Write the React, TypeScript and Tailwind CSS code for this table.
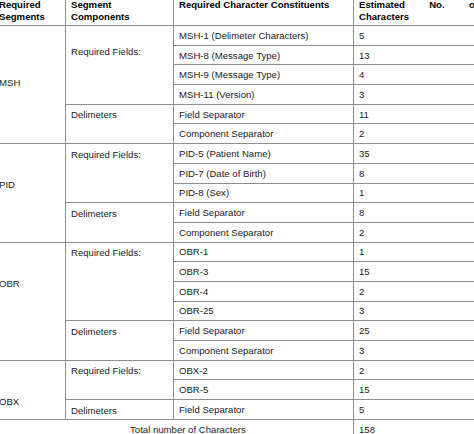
import React from "react";

type Row = [string, string];
type Group = { label: string; pt: string; rows: Row[] };
type Seg = { name: string; pt: string; groups: Group[] };

const span: Record<number, string> = {
  1: "row-span-1",
  2: "row-span-2",
  3: "row-span-3",
  4: "row-span-4",
  5: "row-span-5",
  6: "row-span-6",
};

const data: Seg[] = [
  {
    name: "MSH",
    pt: "pt-[51px]",
    groups: [
      {
        label: "Required Fields:",
        pt: "pt-[20px]",
        rows: [
          ["MSH-1 (Delimeter Characters)", "5"],
          ["MSH-8 (Message Type)", "13"],
          ["MSH-9 (Message Type)", "4"],
          ["MSH-11 (Version)", "3"],
        ],
      },
      {
        label: "Delimeters",
        pt: "pt-[4.5px]",
        rows: [
          ["Field Separator", "11"],
          ["Component Separator", "2"],
        ],
      },
    ],
  },
  {
    name: "PID",
    pt: "pt-[35px]",
    groups: [
      {
        label: "Required Fields:",
        pt: "pt-[4.5px]",
        rows: [
          ["PID-5 (Patient Name)", "35"],
          ["PID-7 (Date of Birth)", "8"],
          ["PID-8 (Sex)", "1"],
        ],
      },
      {
        label: "Delimeters",
        pt: "pt-[4.5px]",
        rows: [
          ["Field Separator", "8"],
          ["Component Separator", "2"],
        ],
      },
    ],
  },
  {
    name: "OBR",
    pt: "pt-[35px]",
    groups: [
      {
        label: "Required Fields:",
        pt: "pt-[4.5px]",
        rows: [
          ["OBR-1", "1"],
          ["OBR-3", "15"],
          ["OBR-4", "2"],
          ["OBR-25", "3"],
        ],
      },
      {
        label: "Delimeters",
        pt: "pt-[4.5px]",
        rows: [
          ["Field Separator", "25"],
          ["Component Separator", "3"],
        ],
      },
    ],
  },
  {
    name: "OBX",
    pt: "pt-[35px]",
    groups: [
      {
        label: "Required Fields:",
        pt: "pt-[4.5px]",
        rows: [
          ["OBX-2", "2"],
          ["OBR-5", "15"],
        ],
      },
      {
        label: "Delimeters",
        pt: "pt-[4.5px]",
        rows: [["Field Separator", "5"]],
      },
    ],
  },
];

const line = "border-[#8e8e8e]";

export default function App() {
  const cells: React.ReactNode[] = [];
  data.forEach((s) => {
    const n = s.groups.reduce((a, g) => a + g.rows.length, 0);
    cells.push(
      <div key={s.name} className={`${span[n]} border-r border-b ${line} pl-[5px] ${s.pt}`}>
        {s.name}
      </div>
    );
    s.groups.forEach((g, gi) => {
      cells.push(
        <div key={s.name + gi} className={`${span[g.rows.length]} border-r border-b ${line} pl-[5px] ${g.pt}`}>
          {g.label}
        </div>
      );
      g.rows.forEach((r, ri) => {
        cells.push(
          <div key={s.name + gi + "a" + ri} className={`flex items-center border-r border-b ${line} pl-[5px] pt-px`}>
            {r[0]}
          </div>
        );
        cells.push(
          <div key={s.name + gi + "b" + ri} className={`flex items-center border-r border-b ${line} pl-[5px] pt-px`}>
            {r[1]}
          </div>
        );
      });
    });
  });

  return (
    <div
      className="w-[474px] h-[434px] overflow-hidden bg-white text-[#1c1c1c] text-[9.6px] leading-[12px]"
      style={{ fontFamily: '"Liberation Sans", Arial, sans-serif' }}
    >
      <div className="-ml-[6px] grid grid-cols-[72px_108px_180px_132px] grid-rows-[26px_repeat(21,19.7px)]">
        <div className={`border-r border-b ${line} pl-[5px] pr-[5px] font-bold text-black leading-[11.5px]`}>
          <div className="-mt-[1px]">Required Segments</div>
        </div>
        <div className={`border-r border-b ${line} pl-[5px] pr-[5px] font-bold text-black leading-[11.5px]`}>
          <div className="-mt-[1px]">Segment Components</div>
        </div>
        <div className={`border-r border-b ${line} pl-[5px] pr-[5px] font-bold text-black leading-[11.5px]`}>
          <div className="-mt-[1px]">Required Character Constituents</div>
        </div>
        <div className={`border-r border-b ${line} pl-[5px] pr-[7px] font-bold text-black leading-[11.5px]`}>
          <div className="-mt-[1px] text-justify">Estimated No. of Characters</div>
        </div>
        {cells}
        <div className={`col-span-3 flex items-center border-r ${line} pl-[136px] pt-px`}>
          Total number of Characters
        </div>
        <div className={`flex items-center border-r ${line} pl-[5px] pt-px`}>158</div>
      </div>
    </div>
  );
}
